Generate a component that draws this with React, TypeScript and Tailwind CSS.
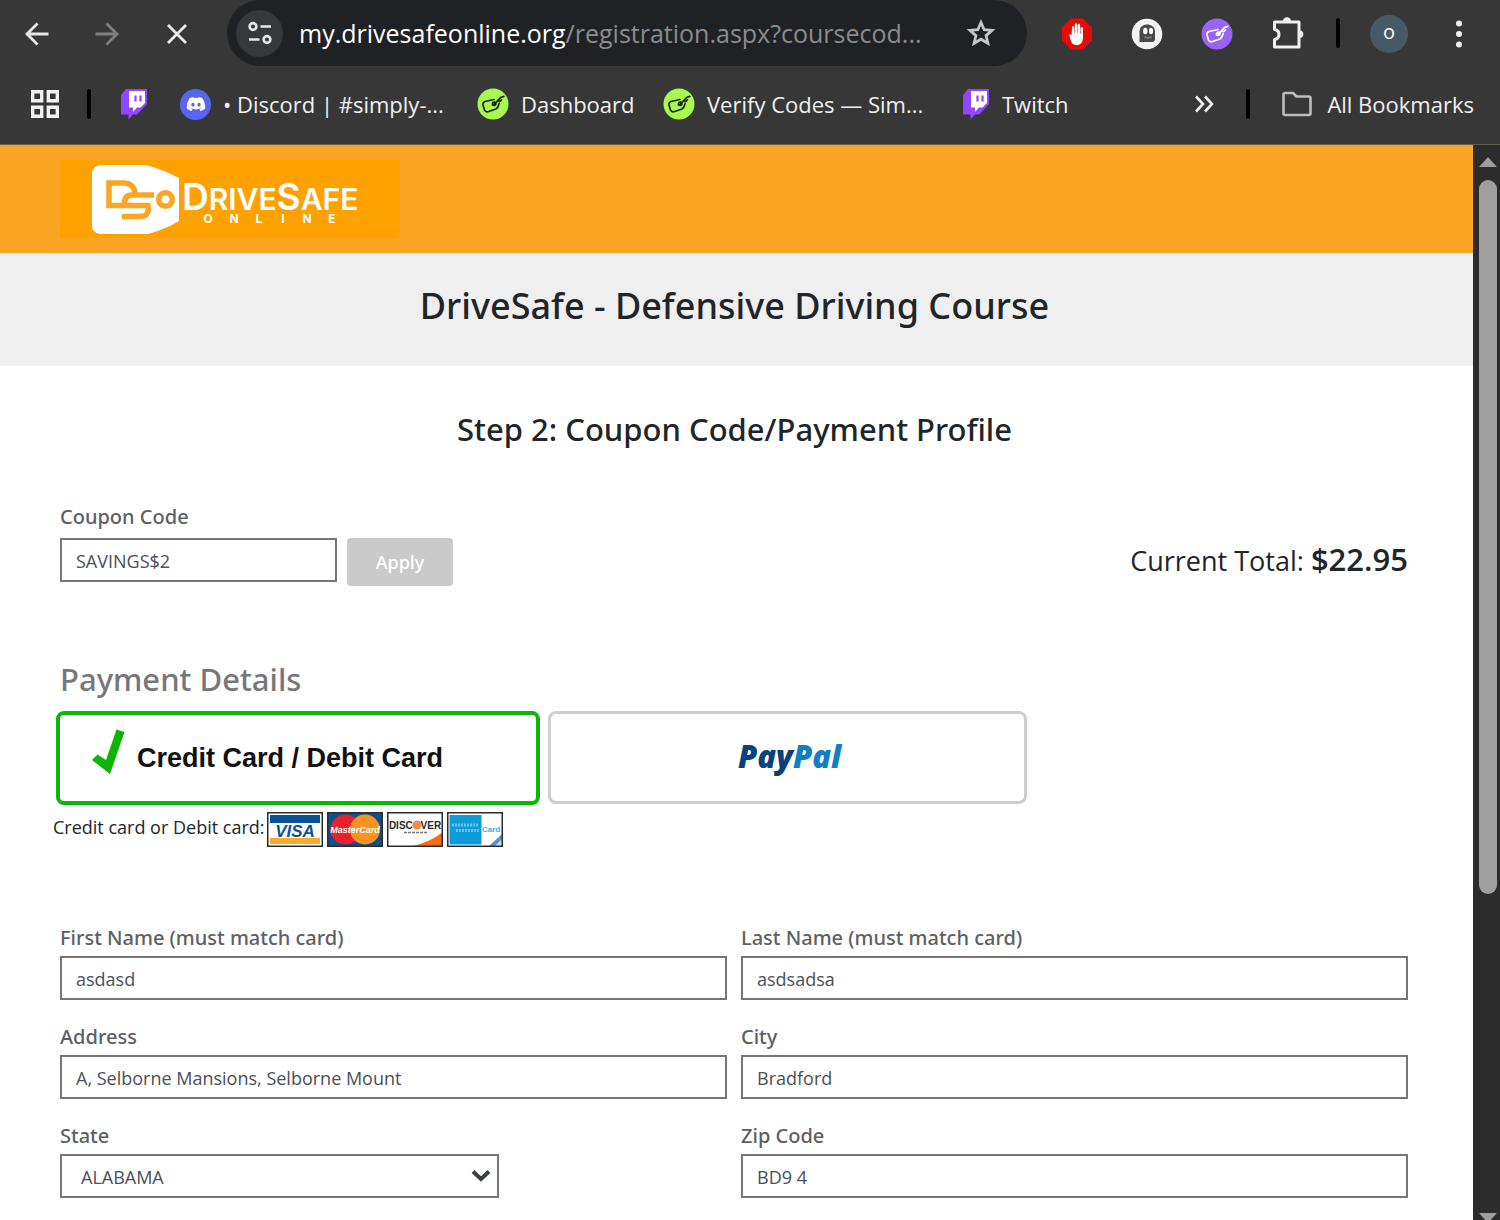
import type { ReactNode } from "react";
import { FaDiscord } from "react-icons/fa";

/* ---------- browser icons ---------- */

function BackIcon() {
  return (
    <svg viewBox="0 0 26 26" className="size-[26px]" fill="none" stroke="#e8e8e8" strokeWidth="2.8">
      <path d="M24.500 13H3M13.500 2.500L3 13l10.500 10.500" />
    </svg>
  );
}

function ForwardIcon() {
  return (
    <svg viewBox="0 0 26 26" className="size-[26px]" fill="none" stroke="#7f7f7f" strokeWidth="2.800">
      <path d="M1.500 13H23M12.500 2.500L23 13 12.500 23.500" />
    </svg>
  );
}

function StopIcon() {
  return (
    <svg viewBox="0 0 22 22" className="size-[22px]" fill="none" stroke="#ececec" strokeWidth="2.800">
      <path d="M2 2l18 18M20 2L2 20" />
    </svg>
  );
}

function SiteInfoIcon() {
  return (
    <svg viewBox="0 0 26 26" className="size-[26px]" fill="none" stroke="#e6e6e6" strokeWidth="2.600">
      <circle cx="6" cy="6.500" r="3.400" />
      <path d="M13.500 6.500H24M2 19.500h10.500" />
      <circle cx="20" cy="19.500" r="3.400" />
    </svg>
  );
}

function StarIcon() {
  return (
    <svg viewBox="0 0 30 30" className="size-[30px]" fill="none" stroke="#c6c6c6" strokeWidth="2.800">
      <path d="M15 4.500l3.200 7.200 7.800.7-5.900 5.200 1.800 7.700L15 21.200l-6.900 4.100 1.800-7.700L4 12.400l7.800-.7z" />
    </svg>
  );
}

function BlockerIcon() {
  return (
    <svg viewBox="0 0 32 32" className="size-8">
      <path d="M10 0.500h12l9 9v13l-9 9H10l-9-9v-13z" fill="#e50b0b" />
      <path
        d="M11 9.500c0-2 2.300-2 2.300 0V15h.5V6.800c0-2.200 2.500-2.200 2.500 0V15h.5V7.400c0-2.100 2.400-2.100 2.400 0V16h.5v-5.300c0-2 2.300-2 2.300 0V19c0 5.500-2.500 8-6.200 8-3.500 0-5.300-2.300-6-4.600L8.500 18c-.6-1.900 1.200-2.500 2.200-1z"
        fill="#fff"
      />
    </svg>
  );
}

function GhostIcon() {
  return (
    <svg viewBox="0 0 32 32" className="size-8">
      <circle cx="16" cy="16" r="15.300" fill="#f3f3f3" />
      <path d="M8.500 24V13.500C8.500 4 24 4 24 13.500V21q0 3-3 3z" fill="#4a4a4a" />
      <ellipse cx="14.300" cy="13" rx="2.200" ry="3.200" fill="#fff" />
      <ellipse cx="20" cy="13" rx="2" ry="3.200" fill="#fff" />
      <path d="M13.500 19q3.500 1.500 7 0" fill="none" stroke="#8a8a8a" strokeWidth="1.500" />
    </svg>
  );
}

function SimplyIcon({ tone }: { tone: "green" | "purple" }) {
  return (
    <svg viewBox="0 0 32 32" className="size-8">
      <circle cx="16" cy="16" r="15.500" fill={tone === "green" ? "#a9f84f" : "#9a63f7"} />
      <g fill="none" stroke={tone === "green" ? "#17240b" : "#ffffff"} strokeWidth="1.700" strokeLinejoin="round" strokeLinecap="round">
        <path d="M17 11.500L8 13.500q-2.500 1-2 3.500l1.500 5q1 2.300 3.500 1.700l8-2.700q1.800-.9 2.300-3.200l.9-2.500" />
        <path d="M15.500 17q-.5-2.500 1.800-2.900 2 .2 1.500 2.200-.8 1.400-2.200 1l5-5.700q1.500-2.600 5.200-3.300M20.800 12.500q2 2 3.600-.7" />
      </g>
    </svg>
  );
}

function PuzzleIcon() {
  return (
    <svg viewBox="0 0 34 34" className="size-[34px]" fill="none" stroke="#f0f0f0" strokeWidth="3" strokeLinejoin="round">
      <path d="M4.500 5H29v25H4.500v-7.500c6-1 6-9 0-10z" />
      <path d="M13 4c0-5 8-5 8 0zM30 13.500c4.500 0 4.500 7.500 0 7.500z" fill="#f0f0f0" stroke="none" />
    </svg>
  );
}

function TwitchIcon() {
  return (
    <svg viewBox="0 0 28 32" className="h-8 w-7">
      <path d="M6 1h21v15L17 26.500h-4l-4.500 5v-5H1V7z" fill="#9146ff" />
      <path d="M9 3h16v12l-4.500 4.500H17L13 24v-4.500H9z" fill="#fff" />
      <path d="M15.500 7.500v6M20.500 7.500v6" stroke="#9146ff" strokeWidth="2.200" />
    </svg>
  );
}

function AppsIcon() {
  return (
    <svg viewBox="0 0 28 28" className="size-7" fill="none" stroke="#f2f2f2" strokeWidth="3.400">
      <path d="M1.700 1.700h9v9h-9zM17.300 1.700h9v9h-9zM1.700 17.300h9v9h-9zM17.300 17.300h9v9h-9z" />
    </svg>
  );
}

function FolderIcon() {
  return (
    <svg viewBox="0 0 30 26" className="h-[26px] w-[30px]" fill="none" stroke="#bdbdbd" strokeWidth="2.600" strokeLinejoin="round">
      <path d="M1.500 3.500q0-1.500 1.500-1.500h8l3.500 3.500H27q1.500 0 1.500 1.500v15.500q0 1.500-1.500 1.500H3q-1.500 0-1.500-1.500z" />
    </svg>
  );
}

function ToolButton({ label, children }: { label: string; children: ReactNode }) {
  return (
    <button type="button" aria-label={label} className="flex h-[67px] w-[70px] shrink-0 items-center justify-center">
      {children}
    </button>
  );
}

function Divider() {
  return <span className="h-[30px] w-1 shrink-0 rounded-sm bg-black" />;
}

function Toolbar() {
  return (
    <div className="flex h-[68px] items-start pr-[6px] pl-[2px]">
      <ToolButton label="Back"><BackIcon /></ToolButton>
      <ToolButton label="Forward"><ForwardIcon /></ToolButton>
      <ToolButton label="Stop loading"><StopIcon /></ToolButton>
      <div className="mx-[15px] flex h-[66px] min-w-0 flex-1 items-center rounded-full bg-[#202125] pr-[31px] pl-[9px]">
        <button type="button" aria-label="Site information" className="flex size-[47px] shrink-0 items-center justify-center rounded-full bg-[#37383a]">
          <SiteInfoIcon />
        </button>
        <p className="min-w-0 flex-1 truncate pl-4 text-[25px] leading-8 text-[#8b8c8e]">
          <span className="text-white">my.drivesafeonline.org</span>/registration.aspx?coursecod...
        </p>
        <button type="button" aria-label="Bookmark this tab" className="shrink-0"><StarIcon /></button>
      </div>
      <ToolButton label="Ad blocker"><BlockerIcon /></ToolButton>
      <ToolButton label="Tracker blocker"><GhostIcon /></ToolButton>
      <ToolButton label="SimplyCodes"><SimplyIcon tone="purple" /></ToolButton>
      <ToolButton label="Extensions"><PuzzleIcon /></ToolButton>
      <div className="flex h-[66px] items-center px-[14px]"><Divider /></div>
      <ToolButton label="Profile">
        <span className="flex size-[38px] items-center justify-center rounded-full bg-[#465a65] pb-1 text-xl leading-6 text-white">o</span>
      </ToolButton>
      <ToolButton label="Menu">
        <svg viewBox="0 0 8 30" className="h-[30px] w-2" fill="#f2f2f2">
          <circle cx="4" cy="4.500" r="3" /><circle cx="4" cy="15" r="3" /><circle cx="4" cy="25.500" r="3" />
        </svg>
      </ToolButton>
    </div>
  );
}

function Bookmark({ icon, text, className }: { icon: ReactNode; text: string; className: string }) {
  return (
    <a href="#" className={`flex shrink-0 items-center gap-3 ${className}`}>
      {icon}
      <span className="whitespace-nowrap">{text}</span>
    </a>
  );
}

function BookmarksBar() {
  return (
    <nav aria-label="Bookmarks" className="flex h-[77px] items-center border-b border-[#5f5b52] pr-[26px] pb-1 pl-[31px] text-[22px] leading-8 text-[#f0f0f0]">
      <button type="button" aria-label="Apps" className="mr-7"><AppsIcon /></button>
      <Divider />
      <a href="#" aria-label="Twitch" className="mr-8 ml-[29px]"><TwitchIcon /></a>
      <Bookmark
        icon={<span className="flex size-[31px] items-center justify-center rounded-full bg-[#5865f2]"><FaDiscord className="size-5 text-white" /></span>}
        text="• Discord | #simply-..."
        className="w-[297px]"
      />
      <Bookmark icon={<SimplyIcon tone="green" />} text="Dashboard" className="w-[186px]" />
      <Bookmark icon={<SimplyIcon tone="green" />} text="Verify Codes — Sim..." className="w-[299px]" />
      <Bookmark icon={<TwitchIcon />} text="Twitch" className="" />
      <button type="button" aria-label="More bookmarks" className="mr-8 ml-auto">
        <svg viewBox="0 0 20 18" className="h-[18px] w-5" fill="none" stroke="#ededed" strokeWidth="2.600">
          <path d="M2 1.500L9 9l-7 7.500M11 1.500L18 9l-7 7.500" />
        </svg>
      </button>
      <Divider />
      <a href="#" className="ml-8 flex shrink-0 items-center gap-[15px]">
        <FolderIcon />
        <span>All Bookmarks</span>
      </a>
    </nav>
  );
}

/* ---------- site artwork ---------- */

function SiteLogo() {
  return (
    <svg viewBox="0 0 339 78" className="h-[78px] w-[339px]" role="img" aria-label="DriveSafe Online">
      <rect width="339" height="78" fill="#ffa200" />
      <path d="M40 5H86Q104 10 119 18V61Q106 69 88 74H40Q32 73 32 65V13Q33 6 40 5Z" fill="#fff" />
      <g fill="none" stroke="#fba524" strokeWidth="5.500">
        <path d="M62 45.500H49V23H65Q74 24 75 33" />
        <path d="M94 35H72Q64 35 64 45.500H88Q90 56.500 80 56.500H62" />
        <circle cx="105.500" cy="39.500" r="6.800" />
      </g>
      <g fill="#fff" fontFamily="Inter, sans-serif">
        <text x="122" y="50" fontSize="30" fontWeight="600">
          <tspan fontSize="37">D</tspan>RIVE<tspan fontSize="37">S</tspan>AFE
        </text>
        <text x="148 174 199 223 247 272" y="63" fontSize="12" fontWeight="700" textAnchor="middle">ONLINE</text>
      </g>
    </svg>
  );
}

function CardFrame({ label, children }: { label: string; children: ReactNode }) {
  return (
    <svg viewBox="0 0 56 35" className="h-[35px] w-14" role="img" aria-label={label}>
      {children}
      <rect x="0.750" y="0.750" width="54.500" height="33.500" fill="none" stroke="#2b2b2b" strokeWidth="1.500" />
    </svg>
  );
}

function CardLogos() {
  return (
    <div className="flex gap-1">
      <CardFrame label="Visa">
        <rect width="56" height="35" fill="#fff" />
        <rect x="3" y="3" width="50" height="8" fill="#0a5399" />
        <rect x="3" y="26" width="50" height="6" fill="#fba92d" />
        <text x="28" y="24.500" textAnchor="middle" fontFamily="Liberation Sans, sans-serif" fontWeight="700" fontStyle="italic" fontSize="17" fill="#0a5399">VISA</text>
      </CardFrame>
      <CardFrame label="MasterCard">
        <rect width="56" height="35" fill="#10508c" />
        <circle cx="18.500" cy="17.500" r="15" fill="#e9212b" />
        <circle cx="38" cy="17.500" r="15" fill="#f7931e" />
        <text x="28" y="21" textAnchor="middle" fontFamily="Liberation Sans, sans-serif" fontWeight="700" fontStyle="italic" fontSize="9" fill="#fff">MasterCard</text>
      </CardFrame>
      <CardFrame label="Discover">
        <rect width="56" height="35" fill="#fff" />
        <path d="M22 35Q42 31 56 20V35Z" fill="#f96d10" />
        <circle cx="30" cy="13" r="4.500" fill="#f58a4b" />
        <text x="28" y="16.500" textAnchor="middle" fontFamily="Liberation Sans, sans-serif" fontWeight="700" fontSize="10" fill="#2a2a2a">DISC<tspan fill="#f58a4b">O</tspan>VER</text>
        <path d="M17 20.500h23" stroke="#777" strokeWidth="1.300" strokeDasharray="3 1" />
      </CardFrame>
      <CardFrame label="American Express">
        <rect width="56" height="35" fill="#fff" />
        <rect x="2.500" y="3" width="32" height="29.500" fill="#0c9bdc" />
        <path d="M5 13h27M9 18.500h24" stroke="#69c4ea" strokeWidth="3" strokeDasharray="2 1" />
        <text x="35" y="20" fontFamily="Liberation Sans, sans-serif" fontWeight="700" fontSize="8" fill="#3aaee0">Card</text>
        <path d="M42 34L55 22V34Z" fill="#5b8fd6" />
        <path d="M48 34L55 27V34Z" fill="#c9def2" />
      </CardFrame>
    </div>
  );
}

/* ---------- form ---------- */

const inputClass = "h-11 w-full border-2 border-[#767676] bg-white px-3.5 pt-0.5 text-[18px] leading-6 text-[#495057] outline-none";
const labelClass = "block font-['Noto_Sans',sans-serif] text-[20px] font-medium leading-7 text-[#5d6063]";

function Field({ id, label, value }: { id: string; label: string; value: string }) {
  return (
    <div className="flex flex-col gap-1">
      <label htmlFor={id} className={labelClass}>{label}</label>
      <input id={id} type="text" defaultValue={value} className={inputClass} />
    </div>
  );
}

function RegistrationPage() {
  return (
    <div className="min-w-0 flex-1 overflow-hidden bg-white">
      <header className="bg-[#fba524] px-[60px] py-[15px]">
        <a href="#" className="inline-block align-top"><SiteLogo /></a>
      </header>
      <div className="bg-[#efefef] pt-7 pr-1 pb-9">
        <h1 className="text-center font-['Noto_Sans',sans-serif] text-[36px] leading-[49px] font-medium text-[#212529]">DriveSafe - Defensive Driving Course</h1>
      </div>
      <main className="pt-[43px]">
        <h2 className="pr-1 text-center font-['Noto_Sans',sans-serif] text-[31px] leading-10 font-medium text-[#212529]">Step 2: Coupon Code/Payment Profile</h2>

        <section className="mt-[54px] pr-[65px] pl-[60px]">
          <label htmlFor="coupon" className={labelClass}>Coupon Code</label>
          <div className="mt-[7px] flex h-12 items-start">
            <div className="w-[277px]">
              <input id="coupon" type="text" defaultValue="SAVINGS$2" className={inputClass} />
            </div>
            <button type="button" className="ml-2.5 h-12 w-[106px] rounded bg-[#cacaca] font-['Noto_Sans',sans-serif] text-[18px] leading-6 font-medium text-white">Apply</button>
            <p className="ml-auto text-[27px] leading-[42px] text-[#212529]">
              Current Total: <strong className="text-[31px] font-semibold">$22.95</strong>
            </p>
          </div>
        </section>

        <section className="mt-[73px]">
          <h3 className="pl-[60px] font-['Noto_Sans',sans-serif] text-[31px] leading-10 font-medium text-[#757779]">Payment Details</h3>
          <div className="mt-3 flex gap-2 pl-14">
            <button type="button" aria-pressed="true" className="flex h-[94px] w-[484px] items-center rounded-lg border-4 border-[#0db605] pl-8 font-['Liberation_Sans',sans-serif] text-[27px] leading-8 font-bold text-[#111]">
              <svg viewBox="0 0 34 46" className="mb-3 h-[46px] w-[34px]" fill="#0db605">
                <path d="M24.500 0.500L32.500 3 18 45 0 31 5.500 25.500 14 31Z" />
              </svg>
              <span className="ml-[11px]">Credit Card / Debit Card</span>
            </button>
            <button type="button" aria-pressed="false" aria-label="PayPal" className="h-[93px] w-[479px] rounded-lg border-3 border-[#cecece] pb-1 pl-1 text-[31px] leading-8 font-extrabold text-[#0f7fc4] italic">
              <span className="text-[#07427c]">Pay</span>Pal
            </button>
          </div>
          <div className="mt-[7px] flex items-start pl-[53px]">
            <p className="w-[214px] text-[18px] leading-[30px] whitespace-nowrap text-[#212529]">Credit card or Debit card:</p>
            <CardLogos />
          </div>
        </section>

        <form className="mt-[77px] grid grid-cols-2 gap-x-3.5 gap-y-[23px] pr-[65px] pl-[60px]">
          <Field id="first-name" label="First Name (must match card)" value="asdasd" />
          <Field id="last-name" label="Last Name (must match card)" value="asdsadsa" />
          <Field id="address" label="Address" value="A, Selborne Mansions, Selborne Mount" />
          <Field id="city" label="City" value="Bradford" />
          <div className="flex flex-col gap-1">
            <label htmlFor="state" className={labelClass}>State</label>
            <div className="relative w-[439px]">
              <select id="state" defaultValue="ALABAMA" className="h-11 w-full appearance-none border-2 border-[#767676] bg-white px-[19px] pt-0.5 text-[18px] leading-6 text-[#495057]">
                <option>ALABAMA</option>
                <option>ALASKA</option>
                <option>ARIZONA</option>
              </select>
              <svg viewBox="0 0 20 14" className="pointer-events-none absolute top-[15px] right-2 h-3.5 w-5" fill="none" stroke="#3b4045" strokeWidth="4">
                <path d="M2 2.500l8 7.500 8-7.500" />
              </svg>
            </div>
          </div>
          <Field id="zip" label="Zip Code" value="BD9 4" />
        </form>
      </main>
    </div>
  );
}

function ScrollTrack() {
  return (
    <div aria-hidden="true" className="flex w-[27px] shrink-0 flex-col items-center bg-[#2c2c2c] pt-3 pl-[3px]">
      <svg viewBox="0 0 18 10" className="h-2.5 w-[18px]" fill="#9f9f9f"><path d="M9 0l9 10H0z" /></svg>
      <div className="mt-[13px] h-[714px] w-[18px] rounded-full bg-[#9f9f9f]" />
      <svg viewBox="0 0 18 7" className="mt-auto h-[7px] w-[18px]" fill="#9f9f9f"><path d="M9 10l9-10H0z" /></svg>
    </div>
  );
}

export default function App() {
  return (
    <div className="flex h-screen flex-col overflow-hidden bg-white font-['Open_Sans','Noto_Sans',sans-serif]">
      <div className="shrink-0 bg-[#373737]">
        <Toolbar />
        <BookmarksBar />
      </div>
      <div className="flex min-h-0 flex-1">
        <RegistrationPage />
        <ScrollTrack />
      </div>
    </div>
  );
}
